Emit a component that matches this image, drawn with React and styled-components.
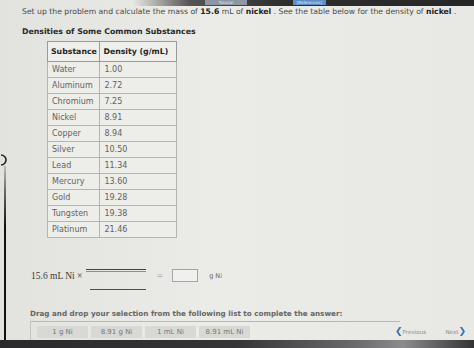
import styled, { createGlobalStyle } from 'styled-components'

const GlobalStyle = createGlobalStyle`
  html, body {
    margin: 0;
    padding: 0;
    background: #e6e6e2;
  }
`

const densities = [
  ['Water', '1.00'],
  ['Aluminum', '2.72'],
  ['Chromium', '7.25'],
  ['Nickel', '8.91'],
  ['Copper', '8.94'],
  ['Silver', '10.50'],
  ['Lead', '11.34'],
  ['Mercury', '13.60'],
  ['Gold', '19.28'],
  ['Tungsten', '19.38'],
  ['Platinum', '21.46'],
]

const choices = ['1 g Ni', '8.91 g Ni', '1 mL Ni', '8.91 mL Ni']

const Page = styled.div`
  width: 474px;
  height: 348px;
  display: flex;
  flex-flow: column;
  overflow: hidden;
  background: linear-gradient(90deg, #e2e2de 0%, #ebebe8 45%, #e8e8e4 100%);
  font-family: "DejaVu Sans", Verdana, sans-serif;
  color: #444;
`

const TopBar = styled.div`
  height: 6px;
  flex: none;
  display: flex;
  align-items: flex-start;
  background: linear-gradient(90deg, rgba(40,40,40,0) 0%, rgba(40,40,40,0) 28%, #555 40%, #2e2e2e 60%, #262626 100%);
`

const Tab = styled.div`
  height: 5px;
  width: ${p => p.$w}px;
  margin-left: ${p => p.$x}px;
  background: ${p => p.$blue ? '#5d8fc4' : '#8d97a3'};
  color: #dfe8f2;
  font-size: 4px;
  line-height: 5px;
  text-align: center;
  overflow: hidden;
`

const Body = styled.div`
  flex: 1;
  display: flex;
  min-height: 0;
`

const Gutter = styled.div`
  width: 22px;
  flex: none;
  display: flex;
  flex-flow: column;
  padding-top: 148px;
  box-sizing: border-box;
`

const EdgeLine = styled.div`
  flex: 1;
  width: 2px;
  margin-left: 4px;
  background: linear-gradient(180deg, #bbb 0%, #666 15%, #111 35%, #111 100%);
`

const Main = styled.div`
  flex: 1;
  display: flex;
  flex-flow: column;
  min-width: 0;
`

const Intro = styled.div`
  font-size: 7.7px;
  line-height: 11px;
  color: #4a4a4a;
  white-space: nowrap;
  b { color: #222; }
`

const Heading = styled.div`
  margin-top: 9px;
  font-size: 7.8px;
  line-height: 11px;
  font-weight: bold;
  color: #2a2a2a;
`

const Table = styled.table`
  margin: 4px 0 0 25px;
  width: 130px;
  border-collapse: collapse;
  border: 1px solid #6f6f6f;
  font-size: 8px;
  color: #626262;
`

const HeadCell = styled.th`
  height: 19px;
  padding: 0 0 0 3px;
  text-align: left;
  font-weight: bold;
  font-size: 7.8px;
  color: #262626;
  background: #efefec;
  border: 1px solid #9a9a9a;
  width: ${p => p.$w}px;
  white-space: nowrap;
`

const Cell = styled.td`
  height: 15px;
  padding: 0 0 0 4px;
  border: 1px solid #b4b4b0;
  background: #ededea;
`

const Equation = styled.div`
  margin: 23px 0 0 9px;
  display: flex;
  align-items: center;
`

const Lead = styled.span`
  font-family: "Liberation Serif", "Times New Roman", serif;
  font-size: 9.5px;
  color: #3a3a3a;
  margin-right: 4px;
`

const Fraction = styled.div`
  width: 60px;
  display: flex;
  flex-flow: column;
`

const Slot = styled.div`
  height: ${p => p.$h}px;
  border-bottom: 1px solid ${p => p.$c};
  margin-left: ${p => p.$inset}px;
`

const Bar = styled.div`
  height: 1px;
  margin-top: 1px;
  background: #8a8e96;
`

const Equals = styled.span`
  margin: 0 9px 0 10px;
  font-size: 8px;
  color: #aaa;
`

const AnswerBox = styled.div`
  width: 24px;
  height: 11px;
  border: 1px solid #a4a4a4;
  background: #f0f0ee;
`

const Unit = styled.span`
  margin-left: 11px;
  font-size: 6.5px;
  color: #666;
`

const Prompt = styled.div`
  margin: 19px 0 0 8px;
  font-size: 7.2px;
  line-height: 9px;
  font-weight: bold;
  color: #666;
  white-space: nowrap;
`

const AnswerRow = styled.div`
  flex: 1;
  margin-top: 3px;
  display: flex;
  align-items: flex-start;
`

const Tray = styled.div`
  margin-left: 8px;
  width: 370px;
  height: 100%;
  box-sizing: border-box;
  border-top: 1px solid #b8b8b4;
  border-left: 1px solid #c4c4c0;
  padding: 4px 0 0 6px;
  display: flex;
  gap: 3px;
`

const Chip = styled.div`
  width: 51px;
  height: 12px;
  background: #d8d8d4;
  font-size: 7px;
  line-height: 12px;
  text-align: center;
  color: #777;
  white-space: nowrap;
`

const Nav = styled.div`
  flex: 1;
  display: flex;
  align-items: center;
  padding: 6px 8px 0 0;
  justify-content: space-between;
  margin-left: -5px;
`

const NavLink = styled.span`
  display: flex;
  align-items: center;
  font-size: 5.6px;
  color: #8a8a8a;
`

const Chevron = styled.span`
  color: #2f6db5;
  font-size: 9px;
  font-weight: bold;
  line-height: 9px;
`

const BottomBar = styled.div`
  height: 8px;
  flex: none;
  background: linear-gradient(90deg, #2a2a2a 0%, #353535 50%, #6a6a6a 75%, #8c8c8c 85%, #4a4a4a 96%, #333 100%);
`

export default function App() {
  return (
    <>
      <GlobalStyle />
      <Page>
        <TopBar>
          <Tab $x={205} $w={42}>Tutorial</Tab>
          <Tab $x={46} $w={33} $blue>[References]</Tab>
        </TopBar>
        <Body>
          <Gutter>
            <svg width="10" height="12" viewBox="0 0 10 12" style={{ flex: 'none' }}>
              <path d="M1 1 A5 5 0 0 1 1 11" fill="none" stroke="#222" strokeWidth="1.6" />
            </svg>
            <EdgeLine />
          </Gutter>
          <Main>
            <Intro>
              Set up the problem and calculate the mass of <b>15.6</b> mL of <b>nickel</b> . See the table below for the density of <b>nickel</b> .
            </Intro>
            <Heading>Densities of Some Common Substances</Heading>
            <Table>
              <thead>
                <tr>
                  <HeadCell $w={48}>Substance</HeadCell>
                  <HeadCell $w={72}>Density (g/mL)</HeadCell>
                </tr>
              </thead>
              <tbody>
                {densities.map(([name, value]) => (
                  <tr key={name}>
                    <Cell>{name}</Cell>
                    <Cell>{value}</Cell>
                  </tr>
                ))}
              </tbody>
            </Table>
            <Equation>
              <Lead>15.6 mL Ni ×</Lead>
              <Fraction>
                <Slot $h={8} $c="#3c4452" $inset={0} />
                <Bar />
                <Slot $h={17} $c="#4a505a" $inset={4} />
              </Fraction>
              <Equals>=</Equals>
              <AnswerBox />
              <Unit>g Ni</Unit>
            </Equation>
            <Prompt>Drag and drop your selection from the following list to complete the answer:</Prompt>
            <AnswerRow>
              <Tray>
                {choices.map(c => <Chip key={c}>{c}</Chip>)}
              </Tray>
              <Nav>
                <NavLink><Chevron>❮</Chevron>Previous</NavLink>
                <NavLink>Next<Chevron>❯</Chevron></NavLink>
              </Nav>
            </AnswerRow>
          </Main>
        </Body>
        <BottomBar />
      </Page>
    </>
  )
}
